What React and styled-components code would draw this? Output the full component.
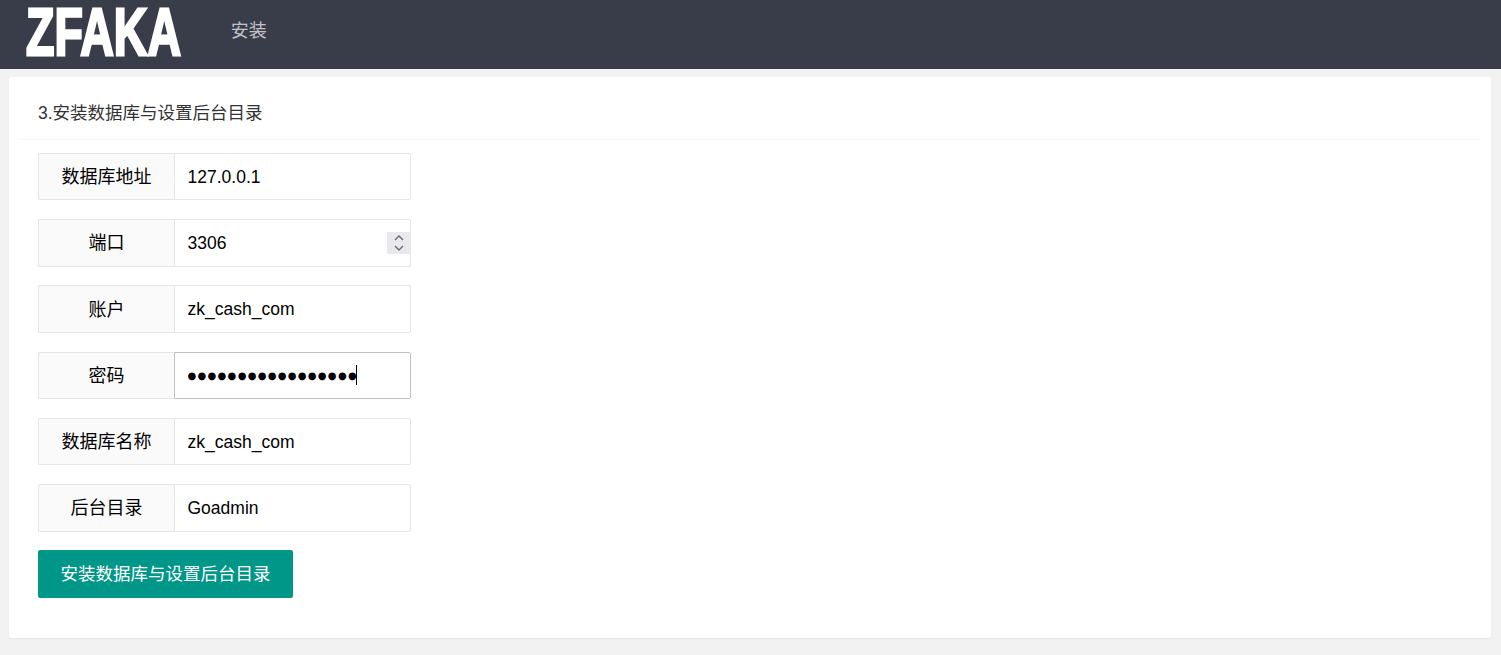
import React from "react";
import styled, { createGlobalStyle } from "styled-components";

const GlobalStyle = createGlobalStyle`
  html, body {
    margin: 0;
    padding: 0;
    background: #f2f2f2;
    font-family: "Liberation Sans", "Noto Sans CJK SC", sans-serif;
  }
  * {
    box-sizing: border-box;
  }
`;

const fields = [
  { label: "数据库地址", value: "127.0.0.1" },
  { label: "端口", value: "3306", spinner: true },
  { label: "账户", value: "zk_cash_com" },
  { label: "密码", value: "●".repeat(17), password: true },
  { label: "数据库名称", value: "zk_cash_com" },
  { label: "后台目录", value: "Goadmin" },
];

const App = () => {
  return (
    <>
      <GlobalStyle />
      <Header>
        <Logo>ZFAKA</Logo>
        <NavItem>安装</NavItem>
      </Header>
      <Card>
        <CardHeader>3.安装数据库与设置后台目录</CardHeader>
        <CardBody>
          {fields.map((field) => (
            <Row key={field.label}>
              <Label>{field.label}</Label>
              <InputWrap>
                <Input
                  readOnly
                  value={field.value}
                  $password={field.password}
                />
                {field.spinner && (
                  <Spinner>
                    <svg width="10" height="20" viewBox="0 0 10 20" fill="none">
                      <path d="M1 7 L5 3 L9 7" stroke="#6b6b70" strokeWidth="1.4" />
                      <path d="M1 13 L5 17 L9 13" stroke="#6b6b70" strokeWidth="1.4" />
                    </svg>
                  </Spinner>
                )}
                {field.password && <Caret />}
              </InputWrap>
            </Row>
          ))}
          <SubmitButton type="button">安装数据库与设置后台目录</SubmitButton>
        </CardBody>
      </Card>
    </>
  );
};

export default App;

const Header = styled.div`
  display: flex;
  align-items: flex-start;
  height: 69px;
  padding-left: 26px;
  background: #393d49;
`;

const Logo = styled.div`
  flex: none;
  margin: 1px 38px 0 0;
  font-family: "Liberation Sans", sans-serif;
  font-weight: 700;
  font-size: 50px;
  line-height: 48.5px;
  color: #fff;
  -webkit-text-stroke: 2.1px #fff;
  white-space: nowrap;
  transform: scale(0.93, 1.32);
  transform-origin: 0 0;
`;

const NavItem = styled.a`
  font-size: 18px;
  line-height: 62px;
  color: rgba(255, 255, 255, 0.7);
`;

const Card = styled.div`
  width: 1482px;
  height: 561px;
  margin: 8px 0 17px 9px;
  background: #fff;
  border-radius: 3px;
  box-shadow: 0 1px 2px 0 rgba(0, 0, 0, 0.05);
`;

const CardHeader = styled.div`
  height: 63px;
  margin: 0 10px;
  padding: 6px 19px 0;
  display: flex;
  align-items: center;
  font-size: 17.5px;
  color: #333;
  border-bottom: 1px solid #f6f6f6;
`;

const CardBody = styled.div`
  display: flex;
  flex-direction: column;
  align-items: flex-start;
  gap: 18.75px;
  padding: 12.75px 29px 0;
`;

const Row = styled.div`
  display: flex;
  width: 373px;
  height: 47.5px;
`;

const Label = styled.div`
  flex: 0 0 136px;
  display: flex;
  align-items: center;
  justify-content: center;
  padding-bottom: 3px;
  font-size: 18px;
  color: #000;
  background: #fafafa;
  border: 1px solid #e6e6e6;
  border-right: none;
  border-radius: 2px 0 0 2px;
`;

const InputWrap = styled.div`
  position: relative;
  flex: 1;
`;

const Input = styled.input`
  display: block;
  width: 100%;
  height: 100%;
  padding: ${(p) => (p.$password ? "0 12.5px" : "1px 12.5px 0")};
  font-family: ${(p) =>
    p.$password ? '"DejaVu Sans", sans-serif' : '"Liberation Sans", sans-serif'};
  font-size: ${(p) => (p.$password ? "10px" : "17.5px")};
  letter-spacing: ${(p) => (p.$password ? "1.3px" : "0")};
  color: #000;
  background: #fff;
  border: 1px solid ${(p) => (p.$password ? "#c2c2c2" : "#e6e6e6")};
  border-radius: 0 2px 2px 0;
  outline: none;
`;

const Spinner = styled.div`
  position: absolute;
  top: 12.5px;
  right: 0;
  width: 24px;
  height: 22px;
  display: flex;
  align-items: center;
  justify-content: center;
  background: #e9e9ed;
`;

const Caret = styled.span`
  position: absolute;
  left: 182px;
  top: 13px;
  width: 1px;
  height: 20px;
  background: #000;
`;

const SubmitButton = styled.button`
  width: 255px;
  height: 47.5px;
  padding: 0 0 3px;
  font-family: inherit;
  font-size: 17.5px;
  color: #fff;
  background: #009688;
  border: none;
  border-radius: 2px;
`;
